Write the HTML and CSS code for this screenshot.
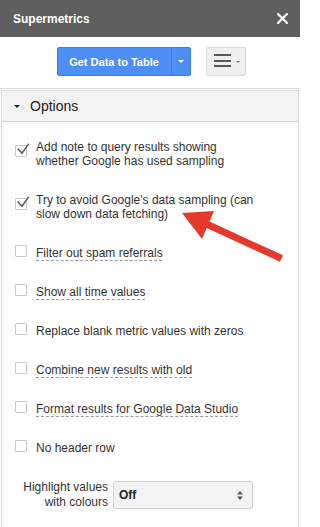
FILE: index.html
```html
<!DOCTYPE html>
<html>
<head>
<meta charset="utf-8">
<link rel="stylesheet" href="styles.css">
</head>
<body>
<div class="header">
  <span class="title">Supermetrics</span>
  <svg class="close" width="11" height="11" viewBox="0 0 11 11"><path d="M1 1L10 10M10 1L1 10" stroke="#fff" stroke-width="2.2" stroke-linecap="square"/></svg>
</div>
<div class="toolbar">
  <div class="split">
    <button class="primary">Get Data to Table</button>
    <button class="drop"><span class="caret-w"></span></button>
  </div>
  <button class="menu"><span class="bars"><i></i><i></i><i></i></span><span class="caret-g"></span></button>
</div>
<div class="rule"></div>
<div class="panel">
  <div class="panel-head"><span class="tri"></span>Options</div>
  <div class="options">
    <div class="option multi"><span class="box"><svg class="check" width="14" height="14" viewBox="0 0 14 14"><path d="M1.7 5.6L6 10.3L12.8 0.6" fill="none" stroke="#5c5c5c" stroke-width="1.5"/></svg></span><span class="text">Add note to query results showing whether Google has used sampling</span></div>
    <div class="option multi"><span class="box"><svg class="check" width="14" height="14" viewBox="0 0 14 14"><path d="M1.7 5.6L6 10.3L12.8 0.6" fill="none" stroke="#5c5c5c" stroke-width="1.5"/></svg></span><span class="text">Try to avoid Google's data sampling (can slow down data fetching)</span></div>
    <div class="option"><span class="box"></span><span class="text dotted">Filter out spam referrals</span></div>
    <div class="option"><span class="box"></span><span class="text dotted">Show all time values</span></div>
    <div class="option"><span class="box"></span><span class="text">Replace blank metric values with zeros</span></div>
    <div class="option"><span class="box"></span><span class="text dotted">Combine new results with old</span></div>
    <div class="option"><span class="box"></span><span class="text dotted">Format results for Google Data Studio</span></div>
    <div class="option"><span class="box"></span><span class="text">No header row</span></div>
    <div class="field">
      <span class="field-label">Highlight values with colours</span>
      <div class="select"><span>Off</span><svg width="6" height="9" viewBox="0 0 6 9"><path d="M0 3.5L3 0L6 3.5Z M0 5.5L3 9L6 5.5Z" fill="#555"/></svg></div>
    </div>
  </div>
</div>
<svg class="annot" width="300" height="527" viewBox="0 0 300 527"><polygon points="182,213 214,211 209.5,221.6 283,255.3 280,261.7 206.7,228.1 202,239" fill="#e5392b"/></svg>
</body>
</html>
```
FILE: styles.css
```css
* { box-sizing: border-box; }
body {
  margin: 0;
  width: 300px;
  height: 527px;
  overflow: hidden;
  position: relative;
  background: #fff;
  font-family: "Liberation Sans", Arial, sans-serif;
}
.header {
  height: 37px;
  background: #5f5f5f;
  display: flex;
  align-items: center;
  justify-content: space-between;
  padding: 0 12px 0 13px;
}
.title {
  color: #fff;
  font-weight: bold;
  font-size: 12px;
}
.close { display: block; }
.toolbar {
  display: flex;
  justify-content: center;
  gap: 15px;
  padding: 10px 0 0 2px;
}
.split {
  display: flex;
  height: 29px;
  border: 1px solid #3a7ee8;
  border-radius: 2px;
  background: #4d8ff5;
}
.primary {
  width: 113px;
  border: none;
  background: transparent;
  color: #fff;
  font-family: "Liberation Sans", Arial, sans-serif;
  font-weight: bold;
  font-size: 11px;
  padding: 0;
}
.drop {
  width: 19px;
  border: none;
  border-left: 1px solid #3a7ee8;
  background: transparent;
  padding: 0;
  display: flex;
  align-items: center;
  justify-content: center;
}
.caret-w {
  width: 0;
  height: 0;
  border-left: 3.5px solid transparent;
  border-right: 3.5px solid transparent;
  border-top: 3.5px solid #fff;
}
.menu {
  width: 40px;
  height: 29px;
  background: #efefef;
  border: 1px solid #dcdcdc;
  border-radius: 2px;
  padding: 0 0 0 3px;
  display: flex;
  align-items: center;
  justify-content: center;
  gap: 5px;
}
.bars {
  display: flex;
  flex-direction: column;
  gap: 3.5px;
  width: 17px;
  margin-top: -2px;
}
.bars i {
  display: block;
  height: 2px;
  background: #595959;
}
.caret-g {
  width: 0;
  height: 0;
  border-left: 2.5px solid transparent;
  border-right: 2.5px solid transparent;
  border-top: 2.5px solid #777;
}
.rule {
  height: 1px;
  background: #dedede;
  margin-top: 12px;
}
.panel {
  margin: 1px 1px 0;
  border: 1px solid #dcdcdc;
  border-bottom: none;
  height: 437px;
}
.panel-head {
  height: 31px;
  background: #f3f3f3;
  border-bottom: 1px solid #d6d6d6;
  display: flex;
  align-items: center;
  padding-left: 12px;
  font-size: 14px;
  color: #222;
}
.tri {
  width: 0;
  height: 0;
  border-left: 3px solid transparent;
  border-right: 3px solid transparent;
  border-top: 3px solid #222;
  margin-right: 10px;
}
.options {
  padding: 18px 12px 0 13px;
  display: flex;
  flex-direction: column;
  gap: 25px;
}
.option {
  display: flex;
  align-items: flex-start;
  gap: 9px;
  font-size: 12px;
  line-height: 14px;
  color: #333;
}
.box {
  position: relative;
  flex: none;
  width: 12px;
  height: 12px;
  border: 1px solid #c9c9c9;
  border-radius: 1px;
  background: #fff;
  margin-top: -1px;
}
.option.multi .box { margin-top: 4.5px; }
.check {
  position: absolute;
  left: 0;
  top: -3px;
  overflow: visible;
}
.text { max-width: 222px; }
.dotted {
  text-decoration: underline dashed #9a9a9a;
  text-decoration-thickness: 1px;
  text-underline-offset: 3px;
}
.field {
  display: flex;
  align-items: center;
  gap: 5px;
  font-size: 12px;
  color: #333;
}
.field-label {
  width: 93px;
  text-align: right;
  line-height: 15px;
}
.select {
  width: 140px;
  height: 28px;
  border: 1px solid #d3d3d3;
  border-radius: 2px;
  background: #f3f3f3;
  padding: 0 9px 0 5px;
  display: flex;
  align-items: center;
  justify-content: space-between;
  font-weight: bold;
  color: #222;
}
.select svg { display: block; }
.annot {
  position: absolute;
  left: 0;
  top: 0;
  pointer-events: none;
}
```
